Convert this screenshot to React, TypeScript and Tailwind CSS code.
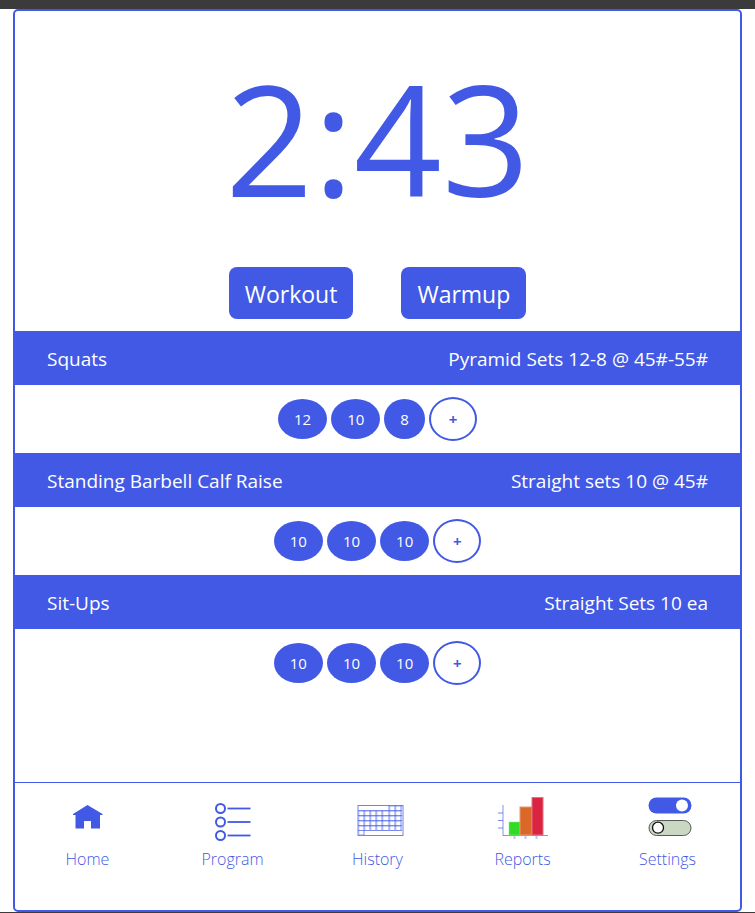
import React, { useState } from 'react';

interface Exercise {
  name: string;
  plan: string;
  sets: number[];
}

const initialExercises: Exercise[] = [
  { name: 'Squats', plan: 'Pyramid Sets 12-8 @ 45#-55#', sets: [12, 10, 8] },
  { name: 'Standing Barbell Calf Raise', plan: 'Straight sets 10 @ 45#', sets: [10, 10, 10] },
  { name: 'Sit-Ups', plan: 'Straight Sets 10 ea', sets: [10, 10, 10] },
];

const HomeIcon = () => (
  <svg viewBox="1 0 56 46" className="w-14 h-[46px]" aria-hidden="true">
    <path d="M28.500 9 L43.500 18 V19 H41 V32.500 H32 V25 H25 V32.500 H16.500 V19 H14 V18 Z" fill="#4159e5" />
  </svg>
);

const ProgramIcon = () => (
  <svg viewBox="1 0 56 46" className="w-14 h-[46px]" fill="none" stroke="#4159e5" aria-hidden="true">
    {[12.5, 26, 39.5].map((y) => (
      <g key={y}>
        <circle cx="16.500" cy={y} r="4.500" strokeWidth="2" />
        <path d={`M23.500 ${y} H46.500`} strokeWidth="1.800" />
      </g>
    ))}
  </svg>
);

const HistoryIcon = () => (
  <svg viewBox="1 0 56 46" className="w-14 h-[46px]" fill="none" stroke="#4159e5" aria-hidden="true">
    <rect x="9" y="9.500" width="45" height="30" strokeOpacity="0.750" />
    {/* day columns */}
    <path d="M9 14.500 H53 M9 19.500 H53 M9 24.500 H53 M9 29.500 H53 M9 34.500 H53" strokeOpacity="0.700" />
    <path d="M15 14.500 V39 M21 14.500 V34 M27 14.500 V34 M33 14.500 V34 M40 9.500 V34 M46 9.500 V34 M52 9.500 V34" strokeOpacity="0.700" />
    <path d="M10 15.500 H52 M10 20.500 H52 M10 25.500 H52 M10 30.500 H52 M10 15 V39 M16 15 V34 M22 15 V34 M28 15 V34 M34 15 V34 M41 10 V34 M47 10 V34 M40 10.500 H53 M10 38.500 H15" strokeOpacity="0.280" />
  </svg>
);

const ReportsIcon = () => (
  <svg viewBox="1 0 56 46" className="w-14 h-[46px]" aria-hidden="true">
    <path d="M9 9 V39.500 H54" fill="none" stroke="#4159e5" strokeOpacity="0.650" />
    <path d="M4 17 H9 M4 32 H9 M20.500 40 V43 M31.500 40 V43 M42.500 40 V43" stroke="#4159e5" strokeOpacity="0.350" strokeWidth="2" />
    <path d="M4 24.500 H9" stroke="#4159e5" strokeOpacity="0.700" />
    <rect x="15" y="26" width="11" height="13" fill="#32db28" stroke="#84e880" strokeWidth="0.500" />
    <rect x="26" y="11" width="12" height="28" fill="#dc6827" stroke="#e39874" />
    <rect x="38" y="1.500" width="11" height="37.500" fill="#db243f" stroke="#e37086" />
  </svg>
);

const SettingsIcon = () => (
  <svg viewBox="1 0 56 46" className="w-14 h-[46px]" aria-hidden="true">
    <rect x="9.500" y="1.500" width="43" height="16" rx="8" fill="#4159e5" />
    <circle cx="43" cy="9.500" r="6" fill="#fff" />
    <rect x="10" y="24.500" width="42" height="15" rx="7.500" fill="#cad7c2" stroke="#555b54" />
    <circle cx="19" cy="31.700" r="5.500" fill="#fff" stroke="#111" strokeWidth="1.300" />
  </svg>
);

const navItems = [
  { label: 'Home', Icon: HomeIcon },
  { label: 'Program', Icon: ProgramIcon },
  { label: 'History', Icon: HistoryIcon },
  { label: 'Reports', Icon: ReportsIcon },
  { label: 'Settings', Icon: SettingsIcon },
];

const App: React.FC = () => {
  const [exercises, setExercises] = useState(initialExercises);

  const addSet = (index: number) => {
    setExercises(exercises.map((ex, i) => (
      i === index ? { ...ex, sets: [...ex.sets, ex.sets[ex.sets.length - 1]] } : ex
    )));
  };

  return (
    <div className="min-h-screen flex flex-col bg-white border-t-[9px] border-b border-[#3b3b3b] px-[13px] font-['Segoe_UI','Open_Sans',sans-serif] text-[#4159e5]">
      <div className="flex-1 flex flex-col border-2 border-[#4159e5] rounded-[5px]">

        {/* Timer */}
        <header className="flex flex-col items-center pt-2 pb-3">
          <h1 className="mb-3 text-[154px] leading-[236px]">2:43</h1>
          <div className="flex gap-12">
            <button className="h-[52px] px-4 pt-0.5 rounded-lg bg-[#4159e5] text-white text-[23px]">Workout</button>
            <button className="h-[52px] px-4 pt-0.5 rounded-lg bg-[#4159e5] text-white text-[23px]">Warmup</button>
          </div>
        </header>

        {/* Exercises */}
        <main>
          {exercises.map((ex, index) => (
            <section key={ex.name}>
              <div className="flex items-center justify-between h-[54px] px-8 pt-0.5 bg-[#4159e5] text-white text-[19px]">
                <h2>{ex.name}</h2>
                <p>{ex.plan}</p>
              </div>
              <div className="flex items-center justify-center gap-1 h-[68px]">
                {ex.sets.map((reps, i) => (
                  <button key={i} className="h-10 px-4 rounded-[50%] bg-[#4159e5] text-white text-[15px]">{reps}</button>
                ))}
                <button
                  onClick={() => addSet(index)}
                  aria-label="Add set"
                  className="w-12 h-11 rounded-[50%] border-2 border-[#4159e5] text-[15px] font-bold"
                >
                  +
                </button>
              </div>
            </section>
          ))}
        </main>

        {/* Bottom nav */}
        <nav className="mt-auto grid grid-cols-5 h-32 pt-[13px] border-t border-[#4159e5]">
          {navItems.map(({ label, Icon }) => (
            <a key={label} href="#" className="flex flex-col items-center gap-[5px] text-base font-light">
              <Icon />
              <span>{label}</span>
            </a>
          ))}
        </nav>
      </div>
    </div>
  );
};

export default App;
